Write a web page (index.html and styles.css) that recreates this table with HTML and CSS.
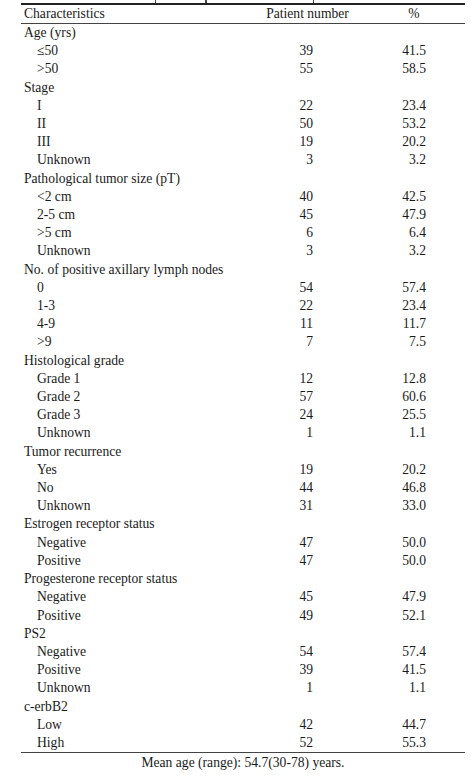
FILE: index.html
```html
<!DOCTYPE html>
<html>
<head>
<meta charset="utf-8">
<link rel="stylesheet" href="styles.css">
</head>
<body>
<div class="page">
  <div class="ticks">
    <span class="tick t1"></span>
    <span class="tick t2"></span>
    <span class="tick t3"></span>
  </div>
  <table class="tbl">
    <colgroup>
      <col class="c1"><col class="c2"><col class="c3">
    </colgroup>
    <thead>
      <tr><th class="h1">Characteristics</th><th class="h2">Patient number</th><th class="h3">%</th></tr>
    </thead>
    <tbody>
      <tr><td class="cat">Age (yrs)</td><td></td><td></td></tr>
      <tr><td class="sub">≤50</td><td class="n">39</td><td class="p">41.5</td></tr>
      <tr><td class="sub">&gt;50</td><td class="n">55</td><td class="p">58.5</td></tr>
      <tr><td class="cat">Stage</td><td></td><td></td></tr>
      <tr><td class="sub">I</td><td class="n">22</td><td class="p">23.4</td></tr>
      <tr><td class="sub">II</td><td class="n">50</td><td class="p">53.2</td></tr>
      <tr><td class="sub">III</td><td class="n">19</td><td class="p">20.2</td></tr>
      <tr><td class="sub">Unknown</td><td class="n">3</td><td class="p">3.2</td></tr>
      <tr><td class="cat">Pathological tumor size (pT)</td><td></td><td></td></tr>
      <tr><td class="sub">&lt;2 cm</td><td class="n">40</td><td class="p">42.5</td></tr>
      <tr><td class="sub">2-5 cm</td><td class="n">45</td><td class="p">47.9</td></tr>
      <tr><td class="sub">&gt;5 cm</td><td class="n">6</td><td class="p">6.4</td></tr>
      <tr><td class="sub">Unknown</td><td class="n">3</td><td class="p">3.2</td></tr>
      <tr><td class="cat">No. of positive axillary lymph nodes</td><td></td><td></td></tr>
      <tr><td class="sub">0</td><td class="n">54</td><td class="p">57.4</td></tr>
      <tr><td class="sub">1-3</td><td class="n">22</td><td class="p">23.4</td></tr>
      <tr><td class="sub">4-9</td><td class="n">11</td><td class="p">11.7</td></tr>
      <tr><td class="sub">&gt;9</td><td class="n">7</td><td class="p">7.5</td></tr>
      <tr><td class="cat">Histological grade</td><td></td><td></td></tr>
      <tr><td class="sub">Grade 1</td><td class="n">12</td><td class="p">12.8</td></tr>
      <tr><td class="sub">Grade 2</td><td class="n">57</td><td class="p">60.6</td></tr>
      <tr><td class="sub">Grade 3</td><td class="n">24</td><td class="p">25.5</td></tr>
      <tr><td class="sub">Unknown</td><td class="n">1</td><td class="p">1.1</td></tr>
      <tr><td class="cat">Tumor recurrence</td><td></td><td></td></tr>
      <tr><td class="sub">Yes</td><td class="n">19</td><td class="p">20.2</td></tr>
      <tr><td class="sub">No</td><td class="n">44</td><td class="p">46.8</td></tr>
      <tr><td class="sub">Unknown</td><td class="n">31</td><td class="p">33.0</td></tr>
      <tr><td class="cat">Estrogen receptor status</td><td></td><td></td></tr>
      <tr><td class="sub">Negative</td><td class="n">47</td><td class="p">50.0</td></tr>
      <tr><td class="sub">Positive</td><td class="n">47</td><td class="p">50.0</td></tr>
      <tr><td class="cat">Progesterone receptor status</td><td></td><td></td></tr>
      <tr><td class="sub">Negative</td><td class="n">45</td><td class="p">47.9</td></tr>
      <tr><td class="sub">Positive</td><td class="n">49</td><td class="p">52.1</td></tr>
      <tr><td class="cat">PS2</td><td></td><td></td></tr>
      <tr><td class="sub">Negative</td><td class="n">54</td><td class="p">57.4</td></tr>
      <tr><td class="sub">Positive</td><td class="n">39</td><td class="p">41.5</td></tr>
      <tr><td class="sub">Unknown</td><td class="n">1</td><td class="p">1.1</td></tr>
      <tr><td class="cat">c-erbB2</td><td></td><td></td></tr>
      <tr><td class="sub">Low</td><td class="n">42</td><td class="p">44.7</td></tr>
      <tr class="last"><td class="sub">High</td><td class="n">52</td><td class="p">55.3</td></tr>
    </tbody>
  </table>
  <p class="note">Mean age (range): 54.7(30-78) years.</p>
</div>
</body>
</html>
```
FILE: styles.css
```css
html, body {
  margin: 0;
  padding: 0;
  background: #fff;
}
.page {
  width: 474px;
  font-family: "Liberation Serif", "Times New Roman", serif;
  font-size: 13.6px;
  color: #1a1a1a;
}
.ticks {
  position: relative;
  height: 3px;
}
.tick {
  position: absolute;
  top: 0;
  width: 1px;
  height: 3px;
  background: #444;
}
.t1 { left: 155px; }
.t2 { left: 205px; width: 2px; }
.t3 { left: 313px; }
.tbl {
  margin-left: 21px;
  width: 444px;
  border-collapse: collapse;
  table-layout: fixed;
}
.c1 { width: 245px; }
.c2 { width: 83px; }
.c3 { width: 116px; }
.tbl thead tr {
  border-top: 2px solid #222;
  border-bottom: 1.5px solid #444;
}
.tbl th {
  font-weight: normal;
  height: 18px;
  padding: 0;
  line-height: 18px;
  white-space: nowrap;
}
.tbl .h1 { text-align: left; padding-left: 3px; }
.tbl .h2 { text-align: center; }
.tbl .h3 { text-align: center; padding-left: 14px; }
.tbl td {
  height: 18.2px;
  padding: 0;
  line-height: 18.2px;
  white-space: nowrap;
}
.tbl .cat { padding-left: 3px; }
.tbl .sub { padding-left: 16px; }
.tbl .n { text-align: right; padding-right: 36px; }
.tbl .p { text-align: right; padding-right: 39px; }
.tbl tr.last { border-bottom: 1.5px solid #444; }
.note {
  margin: 0;
  width: 486px;
  text-align: center;
  line-height: 19px;
}
```
